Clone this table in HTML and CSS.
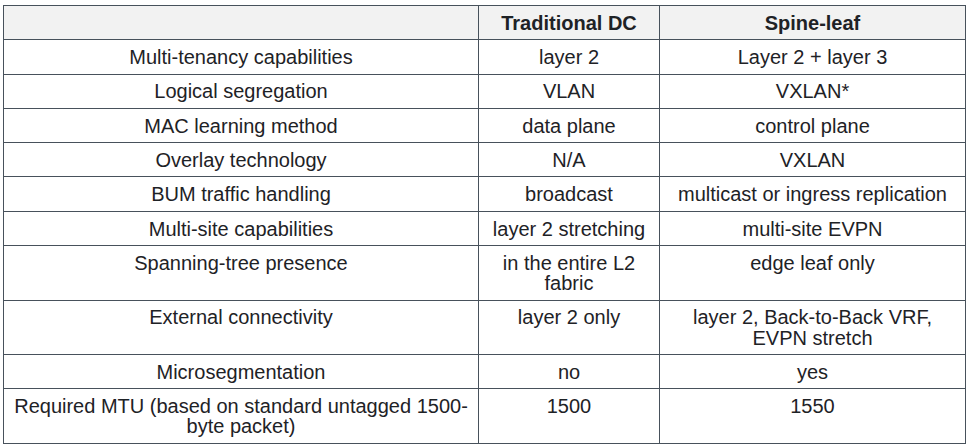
FILE: index.html
```html
<!DOCTYPE html>
<html lang="en">
<head>
<meta charset="utf-8">
<title>Traditional DC vs Spine-leaf</title>
<link rel="stylesheet" href="styles.css">
</head>
<body>
<table class="cmp">
  <colgroup>
    <col class="c-feature">
    <col class="c-trad">
    <col class="c-spine">
  </colgroup>
  <thead>
    <tr class="head">
      <th></th>
      <th>Traditional DC</th>
      <th>Spine-leaf</th>
    </tr>
  </thead>
  <tbody>
    <tr><td>Multi-tenancy capabilities</td><td>layer 2</td><td>Layer 2 + layer 3</td></tr>
    <tr><td>Logical segregation</td><td>VLAN</td><td>VXLAN*</td></tr>
    <tr><td>MAC learning method</td><td>data plane</td><td>control plane</td></tr>
    <tr><td>Overlay technology</td><td>N/A</td><td>VXLAN</td></tr>
    <tr><td>BUM traffic handling</td><td>broadcast</td><td>multicast or ingress replication</td></tr>
    <tr><td>Multi-site capabilities</td><td>layer 2 stretching</td><td>multi-site EVPN</td></tr>
    <tr><td>Spanning-tree presence</td><td>in the entire L2 fabric</td><td>edge leaf only</td></tr>
    <tr><td>External connectivity</td><td>layer 2 only</td><td>layer 2, Back-to-Back VRF, EVPN stretch</td></tr>
    <tr><td>Microsegmentation</td><td>no</td><td>yes</td></tr>
    <tr><td>Required MTU (based on standard untagged 1500-byte packet)</td><td>1500</td><td>1550</td></tr>
  </tbody>
</table>
</body>
</html>
```
FILE: styles.css
```css
html, body {
  margin: 0;
  padding: 0;
  background: #ffffff;
}

body {
  padding: 5px 0 0 3px;
  font-family: "Liberation Sans", Arial, sans-serif;
  color: #1e2226;
}

.cmp {
  border-collapse: collapse;
  table-layout: fixed;
  width: 963px;
  font-size: 20px;
  line-height: 20.2px;
}

.c-feature { width: 475px; }
.c-trad { width: 181px; }
.c-spine { width: 306px; }

.cmp th,
.cmp td {
  border: 1px solid #47515b;
  padding: 6.8px 8px 6.3px;
  text-align: center;
  vertical-align: top;
}

.cmp th {
  font-weight: bold;
}

.head th {
  background: #f2f2f2;
}
```
